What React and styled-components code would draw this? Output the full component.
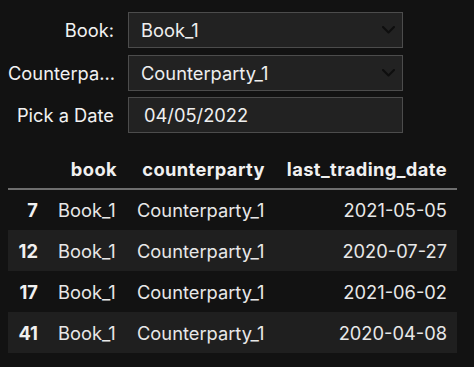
import React from "react";
import styled, { createGlobalStyle } from "styled-components";

const GlobalStyle = createGlobalStyle`
  html, body {
    margin: 0;
    padding: 0;
    background: #121212;
  }
  body {
    font-family: Inter, "Liberation Sans", Arial, sans-serif;
    color: #ececec;
  }
`;

const rows = [
  { idx: 7, book: "Book_1", cp: "Counterparty_1", date: "2021-05-05" },
  { idx: 12, book: "Book_1", cp: "Counterparty_1", date: "2020-07-27" },
  { idx: 17, book: "Book_1", cp: "Counterparty_1", date: "2021-06-02" },
  { idx: 41, book: "Book_1", cp: "Counterparty_1", date: "2020-04-08" },
];

function Chevron() {
  return (
    <svg width="13" height="8" viewBox="0 0 13 8">
      <polyline
        points="1,1 6.5,6.5 12,1"
        fill="none"
        stroke="#0e0e0e"
        strokeWidth="2"
        strokeLinecap="round"
        strokeLinejoin="round"
      />
    </svg>
  );
}

function App() {
  return (
    <Page>
      <GlobalStyle />
      <Form>
        <FieldRow>
          <Label>Book:</Label>
          <Field>
            <FieldText>Book_1</FieldText>
            <Chevron />
          </Field>
        </FieldRow>
        <FieldRow>
          <Label title="Counterparty:">Counterpa...</Label>
          <Field>
            <FieldText>Counterparty_1</FieldText>
            <Chevron />
          </Field>
        </FieldRow>
        <FieldRow>
          <Label>Pick a Date</Label>
          <Field date>
            <FieldText>04/05/2022</FieldText>
          </Field>
        </FieldRow>
      </Form>

      <Table>
        <thead>
          <tr>
            <Th w={40}></Th>
            <Th w={79}>book</Th>
            <Th w={148}>counterparty</Th>
            <Th w={182}>last_trading_date</Th>
          </tr>
        </thead>
        <tbody>
          {rows.map((r, i) => (
            <Row key={r.idx} striped={i % 2 === 1}>
              <Index>{r.idx}</Index>
              <Td>{r.book}</Td>
              <Td>{r.cp}</Td>
              <Td right>{r.date}</Td>
            </Row>
          ))}
        </tbody>
      </Table>
    </Page>
  );
}

export default App;

const Page = styled.div`
  width: 474px;
  height: 367px;
  padding: 12px 0 0 8px;
  box-sizing: border-box;
`;

const Form = styled.div`
  display: flex;
  flex-direction: column;
  gap: 6.5px;
`;

const FieldRow = styled.div`
  display: flex;
  align-items: center;
  gap: 14px;
`;

const Label = styled.div`
  width: 106px;
  text-align: right;
  font-size: 18.3px;
  color: #f2f2f2;
  white-space: nowrap;
  overflow: hidden;
`;

const Field = styled.div`
  width: 275px;
  height: 36px;
  box-sizing: border-box;
  display: flex;
  align-items: center;
  justify-content: space-between;
  padding: 0 7px 0 ${(p) => (p.date ? "15px" : "12px")};
  background: #222222;
  border: 1px solid #4c4c4c;
  font-size: 18.3px;
  color: #efefef;
`;

const FieldText = styled.span`
  white-space: nowrap;
`;

const Table = styled.table`
  margin-top: 17px;
  width: 449px;
  table-layout: fixed;
  border-collapse: collapse;
  font-size: 18.3px;
`;

const Th = styled.th`
  box-sizing: border-box;
  width: ${(p) => p.w}px;
  height: 39px;
  padding: 0 10px;
  text-align: right;
  font-weight: 700;
  letter-spacing: 0.4px;
  color: #f0f0f0;
  border-bottom: 2px solid #6e6e6e;
  white-space: nowrap;
`;

const Row = styled.tr`
  height: 41px;
  background: ${(p) => (p.striped ? "#1f1f1f" : "transparent")};
`;

const Td = styled.td`
  padding: 0 10px;
  text-align: ${(p) => (p.right ? "right" : "left")};
  color: #e8e8e8;
  white-space: nowrap;
`;

const Index = styled.td`
  padding: 0 10px;
  text-align: right;
  font-weight: 700;
  color: #f0f0f0;
`;
